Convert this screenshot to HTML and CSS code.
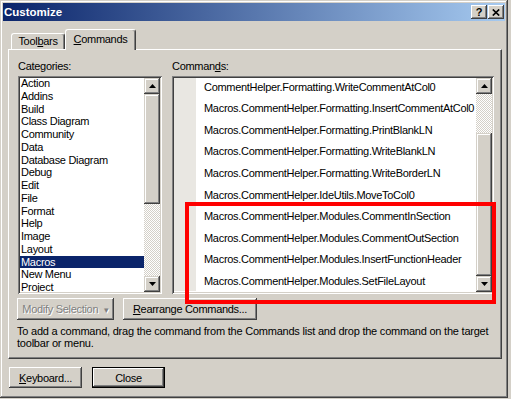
FILE: index.html
```html
<!DOCTYPE html>
<html lang="en">
<head>
    <meta charset="UTF-8">
    <title>Customize</title>
    <link rel="stylesheet" href="styles.css">
</head>
<body>
    <div class="window">
        <div class="titlebar">
            <span class="title">Customize</span>
            <div class="caption-buttons">
                <button class="cap help">?</button>
                <button class="cap">
                    <svg width="8" height="7" viewBox="0 0 8 7"><path d="M0.8 0.5l6.4 6M7.2 0.5l-6.4 6" stroke="#000" stroke-width="1.7"/></svg>
                </button>
            </div>
        </div>

        <div class="main">
            <div class="tabs">
                <div class="tab">Tool<u>b</u>ars</div>
                <div class="tab active"><u>C</u>ommands</div>
            </div>

            <div class="panel">
                <div class="lists">
                    <div class="col">
                        <label>Cate<u>g</u>ories:</label>
                        <div class="listbox cat">
                            <ul class="items">
                                <li>Action</li>
                                <li>Addins</li>
                                <li>Build</li>
                                <li>Class Diagram</li>
                                <li>Community</li>
                                <li>Data</li>
                                <li>Database Diagram</li>
                                <li>Debug</li>
                                <li>Edit</li>
                                <li>File</li>
                                <li>Format</li>
                                <li>Help</li>
                                <li>Image</li>
                                <li>Layout</li>
                                <li class="selected">Macros</li>
                                <li>New Menu</li>
                                <li>Project</li>
                            </ul>
                            <div class="scrollbar">
                                <div class="sb-btn"><svg width="7" height="4" viewBox="0 0 7 4"><path d="M3.5 0L7 4H0z"/></svg></div>
                                <div class="sb-thumb cat-thumb"></div>
                                <div class="sb-track grow"></div>
                                <div class="sb-btn"><svg width="7" height="4" viewBox="0 0 7 4"><path d="M0 0h7L3.5 4z"/></svg></div>
                            </div>
                        </div>
                    </div>

                    <div class="col">
                        <label>Comman<u>d</u>s:</label>
                        <div class="listbox cmd">
                            <ul class="items rows">
                                <li><i class="icon-cell"></i><span>CommentHelper.Formatting.WriteCommentAtCol0</span></li>
                                <li><i class="icon-cell"></i><span>Macros.CommentHelper.Formatting.InsertCommentAtCol0</span></li>
                                <li><i class="icon-cell"></i><span>Macros.CommentHelper.Formatting.PrintBlankLN</span></li>
                                <li><i class="icon-cell"></i><span>Macros.CommentHelper.Formatting.WriteBlankLN</span></li>
                                <li><i class="icon-cell"></i><span>Macros.CommentHelper.Formatting.WriteBorderLN</span></li>
                                <li><i class="icon-cell"></i><span>Macros.CommentHelper.IdeUtils.MoveToCol0</span></li>
                                <li><i class="icon-cell"></i><span>Macros.CommentHelper.Modules.CommentInSection</span></li>
                                <li><i class="icon-cell"></i><span>Macros.CommentHelper.Modules.CommentOutSection</span></li>
                                <li><i class="icon-cell"></i><span>Macros.CommentHelper.Modules.InsertFunctionHeader</span></li>
                                <li><i class="icon-cell"></i><span>Macros.CommentHelper.Modules.SetFileLayout</span></li>
                            </ul>
                            <div class="scrollbar">
                                <div class="sb-btn"><svg width="7" height="4" viewBox="0 0 7 4"><path d="M3.5 0L7 4H0z"/></svg></div>
                                <div class="sb-track cmd-track"></div>
                                <div class="sb-thumb grow"></div>
                                <div class="sb-btn"><svg width="7" height="4" viewBox="0 0 7 4"><path d="M0 0h7L3.5 4z"/></svg></div>
                            </div>
                        </div>
                    </div>
                </div>

                <div class="actions">
                    <button class="btn modify" disabled>Modify Selection <span class="arrow">▾</span></button>
                    <button class="btn rearrange"><u>R</u>earrange Commands...</button>
                </div>

                <p class="hint">To add a command, drag the command from the Commands list and drop the command on the target<br>toolbar or menu.</p>
            </div>

            <div class="footer">
                <button class="btn"><u>K</u>eyboard...</button>
                <button class="btn default">Close</button>
            </div>
        </div>

        <div class="annotation"></div>
    </div>
</body>
</html>
```

FILE: styles.css
```css
* {
    box-sizing: border-box;
}

body {
    margin: 0;
    background-color: #d4d0c8;
    font-family: "Liberation Sans", Arial, sans-serif;
    font-size: 11px;
    letter-spacing: -0.3px;
    color: #000;
}

.window {
    position: relative;
    width: 508px;
    height: 398px;
    padding: 3px;
    background-color: #d4d0c8;
    box-shadow: inset -1px -1px #404040, inset 1px 1px #d4d0c8,
                inset -2px -2px #808080, inset 2px 2px #fff;
}

/* title bar */
.titlebar {
    height: 18px;
    display: flex;
    align-items: center;
    justify-content: space-between;
    padding: 0 1px 0 1px;
    background: linear-gradient(to right, #0a246a, #a6caf0);
}

.title {
    color: #fff;
    font-weight: bold;
    font-size: 11.5px;
    letter-spacing: 0;
}

.caption-buttons {
    display: flex;
    gap: 1px;
}

.cap {
    width: 16px;
    height: 14px;
    padding: 0;
    border: 0;
    display: flex;
    align-items: center;
    justify-content: center;
    background-color: #d4d0c8;
    box-shadow: inset -1px -1px #404040, inset 1px 1px #fff, inset -2px -2px #808080;
}

.cap.help {
    font-family: "Liberation Sans", Arial, sans-serif;
    font-weight: bold;
    font-size: 11px;
    line-height: 12px;
}

/* tabs + panel */
.main {
    padding: 0 3px 0 5px;
}

.tabs {
    display: flex;
    align-items: flex-end;
    height: 20px;
    margin-top: 8px;
    padding-left: 3px;
    position: relative;
    z-index: 1;
}

.tab {
    width: 54px;
    height: 16px;
    line-height: 14px;
    text-align: center;
    background-color: #d4d0c8;
    border: 1px solid;
    border-color: #fff #404040 #d4d0c8 #fff;
    border-bottom: 0;
    border-radius: 3px 3px 0 0;
    box-shadow: inset -1px 0 #808080;
}

.tab.active {
    width: 71px;
    height: 21px;
    line-height: 18px;
    margin-bottom: -1px;
}

.panel {
    height: 310px;
    padding: 10px 7px 0 9px;
    border: 1px solid;
    border-color: #fff #404040 #404040 #fff;
    box-shadow: inset -1px -1px #808080;
}

.lists {
    display: flex;
    gap: 10px;
}

.col label {
    display: block;
    line-height: 13px;
    margin-bottom: 3px;
}

.listbox {
    display: flex;
    height: 218px;
    padding: 2px;
    background-color: #fff;
    box-shadow: inset 1px 1px #808080, inset -1px -1px #fff,
                inset 2px 2px #404040, inset -2px -2px #d4d0c8;
}

.listbox.cat {
    width: 144px;
}

.listbox.cmd {
    width: 322px;
}

.items {
    flex: 1;
    margin: 0;
    padding: 0;
    list-style: none;
    overflow: hidden;
}

.cat .items li {
    height: 12.75px;
    line-height: 12.75px;
    padding-left: 1px;
    white-space: nowrap;
}

.cat .items li:first-child {
    margin-top: -1px;
}

.cat .items li.selected {
    background-color: #0a246a;
    color: #fff;
}

.rows li {
    display: flex;
    align-items: center;
    height: 21.55px;
    white-space: nowrap;
}

.rows li:first-child {
    margin-top: -2px;
}

.icon-cell {
    align-self: stretch;
    flex: none;
    width: 22px;
    background-color: #e9e7e2;
}

.rows span {
    padding-left: 8px;
}

/* scrollbars */
.scrollbar {
    width: 16px;
    display: flex;
    flex-direction: column;
}

.sb-btn,
.sb-thumb {
    background-color: #d4d0c8;
    box-shadow: inset -1px -1px #404040, inset 1px 1px #d4d0c8,
                inset -2px -2px #808080, inset 2px 2px #fff;
}

.sb-btn {
    height: 16px;
    flex: none;
    display: flex;
    align-items: center;
    justify-content: center;
}

.sb-track {
    background: repeating-conic-gradient(#fff 0 25%, #d4d0c8 0 50%) 0 0 / 2px 2px;
}

.cat-thumb {
    height: 110px;
}

.cmd-track {
    height: 39px;
}

.grow {
    flex: 1;
}

/* buttons */
.btn {
    height: 22px;
    padding: 0;
    border: 0;
    font-family: inherit;
    font-size: 11px;
    letter-spacing: -0.3px;
    color: #000;
    background-color: #d4d0c8;
    box-shadow: inset -1px -1px #404040, inset 1px 1px #fff,
                inset -2px -2px #808080, inset 2px 2px #d4d0c8;
}

.actions {
    display: flex;
    gap: 9px;
    margin: 4px 0 0 -1px;
}

.modify {
    width: 97px;
    color: #808080;
    text-shadow: 1px 1px #fff;
}

.modify .arrow {
    font-size: 9px;
    margin-left: 3px;
}

.rearrange {
    width: 134px;
}

.hint {
    margin: 5px 0 0 -1px;
    line-height: 12px;
    letter-spacing: -0.22px;
    white-space: nowrap;
}

.footer {
    display: flex;
    gap: 10px;
    margin-top: 8px;
    padding-left: 1px;
}

.footer .btn {
    width: 73px;
    height: 21px;
}

.btn.default {
    border: 1px solid #000;
}

/* red highlight drawn over the list */
.annotation {
    position: absolute;
    left: 185px;
    top: 202px;
    width: 311px;
    height: 102px;
    border: 4px solid #f00;
}
```
